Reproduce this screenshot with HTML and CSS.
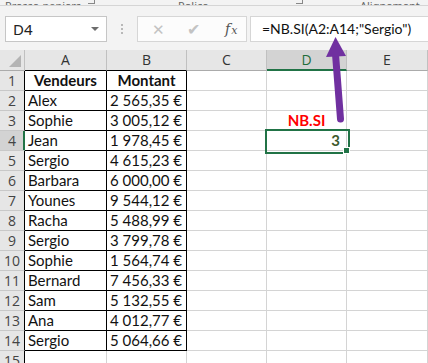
FILE: index.html
```html
<!DOCTYPE html>
<html lang="fr">
<head>
    <meta charset="UTF-8">
    <title>NB.SI - Excel</title>
    <link rel="stylesheet" href="styles.css">
</head>
<body>
    <div class="ribbon-tail">
        <span class="group-label lbl-clip">Presse-papiers</span>
        <span class="launcher"></span>
        <span class="group-label lbl-font">Police</span>
        <span class="launcher"></span>
        <span class="group-label lbl-align">Alignement</span>
    </div>

    <div class="formula-bar">
        <div class="name-box">
            <span>D4</span>
            <span class="caret"></span>
        </div>
        <div class="grip"><i></i><i></i><i></i></div>
        <div class="fx-buttons">
            <span class="btn-cancel">&#x2715;</span>
            <span class="btn-ok">&#x2714;</span>
            <span class="btn-fx"><i>f</i><i>x</i></span>
        </div>
        <div class="formula-input">=NB.SI(A2:A14;"Sergio")</div>
    </div>

    <div class="sheet">
        <div class="corner"><span class="select-all"></span></div>
        <div class="col-head in-table">A</div>
        <div class="col-head in-table">B</div>
        <div class="col-head">C</div>
        <div class="col-head active">D</div>
        <div class="col-head">E</div>

        <div class="row-head">1</div>
        <div class="cell t title">Vendeurs</div>
        <div class="cell t title">Montant</div>
        <div class="cell"></div><div class="cell"></div><div class="cell"></div>

        <div class="row-head">2</div>
        <div class="cell t">Alex</div><div class="cell t num">2&nbsp;565,35 €</div>
        <div class="cell"></div><div class="cell"></div><div class="cell"></div>

        <div class="row-head">3</div>
        <div class="cell t">Sophie</div><div class="cell t num">3&nbsp;005,12 €</div>
        <div class="cell"></div><div class="cell label-red">NB.SI</div><div class="cell"></div>

        <div class="row-head active">4</div>
        <div class="cell t">Jean</div><div class="cell t num">1&nbsp;978,45 €</div>
        <div class="cell"></div><div class="cell selected">3</div><div class="cell"></div>

        <div class="row-head">5</div>
        <div class="cell t">Sergio</div><div class="cell t num">4&nbsp;615,23 €</div>
        <div class="cell"></div><div class="cell"></div><div class="cell"></div>

        <div class="row-head">6</div>
        <div class="cell t">Barbara</div><div class="cell t num">6&nbsp;000,00 €</div>
        <div class="cell"></div><div class="cell"></div><div class="cell"></div>

        <div class="row-head">7</div>
        <div class="cell t">Younes</div><div class="cell t num">9&nbsp;544,12 €</div>
        <div class="cell"></div><div class="cell"></div><div class="cell"></div>

        <div class="row-head">8</div>
        <div class="cell t">Racha</div><div class="cell t num">5&nbsp;488,99 €</div>
        <div class="cell"></div><div class="cell"></div><div class="cell"></div>

        <div class="row-head">9</div>
        <div class="cell t">Sergio</div><div class="cell t num">3&nbsp;799,78 €</div>
        <div class="cell"></div><div class="cell"></div><div class="cell"></div>

        <div class="row-head">10</div>
        <div class="cell t">Sophie</div><div class="cell t num">1&nbsp;564,74 €</div>
        <div class="cell"></div><div class="cell"></div><div class="cell"></div>

        <div class="row-head">11</div>
        <div class="cell t">Bernard</div><div class="cell t num">7&nbsp;456,33 €</div>
        <div class="cell"></div><div class="cell"></div><div class="cell"></div>

        <div class="row-head">12</div>
        <div class="cell t">Sam</div><div class="cell t num">5&nbsp;132,55 €</div>
        <div class="cell"></div><div class="cell"></div><div class="cell"></div>

        <div class="row-head">13</div>
        <div class="cell t">Ana</div><div class="cell t num">4&nbsp;012,77 €</div>
        <div class="cell"></div><div class="cell"></div><div class="cell"></div>

        <div class="row-head">14</div>
        <div class="cell t">Sergio</div><div class="cell t num">5&nbsp;064,66 €</div>
        <div class="cell"></div><div class="cell"></div><div class="cell"></div>

        <div class="row-head">15</div>
        <div class="cell"></div><div class="cell"></div>
        <div class="cell"></div><div class="cell"></div><div class="cell"></div>
    </div>

    <!-- fleche violette qui montre la formule -->
    <svg class="arrow" width="428" height="363" viewBox="0 0 428 363">
        <line x1="340.5" y1="119" x2="335.5" y2="54" stroke="#7030a0" stroke-width="7" stroke-linecap="round"/>
        <polygon points="335.5,37 326,57 346,56" fill="#7030a0"/>
    </svg>
</body>
</html>
```

FILE: styles.css
```css
body {
    margin: 0;
    width: 428px;
    height: 363px;
    overflow: hidden;
    background-color: #f3f3f3;
    font-family: Lato, "Liberation Sans", sans-serif;
    position: relative;
}

/* bas du ruban, coupé */
.ribbon-tail {
    height: 5px;
    border-bottom: 1px solid #d5d5d5;
    overflow: hidden;
    display: flex;
    align-items: flex-end;
    font-family: "Noto Sans", sans-serif;
    font-size: 11px;
    color: #666;
    white-space: nowrap;
}

.ribbon-tail > span {
    flex-shrink: 0;
}

.group-label {
    line-height: 12px;
    margin-bottom: -7px;
}

.lbl-clip { margin-left: 5px; width: 83px; }
.lbl-font { margin-left: 83px; width: 118px; }
.lbl-align { margin-left: 57px; }

.launcher {
    width: 6px;
    height: 6px;
    border-right: 1px solid #888;
    border-bottom: 1px solid #888;
    margin-bottom: 1px;
}

/* barre de formule */
.formula-bar {
    display: flex;
    align-items: center;
    padding: 10px 0 8px 5px;
    height: 26px;
}

.name-box {
    height: 24px;
    width: 93px;
    background-color: white;
    border: 1px solid #c6c6c6;
    display: flex;
    align-items: center;
    justify-content: space-between;
    padding-left: 7px;
    font-size: 15px;
    color: #222;
    font-family: "Noto Sans", sans-serif;
}

.caret {
    width: 0;
    height: 0;
    border-left: 4px solid transparent;
    border-right: 4px solid transparent;
    border-top: 4px solid #6d6d6d;
    margin-right: 7px;
}

.grip {
    width: 30px;
    display: flex;
    flex-direction: column;
    align-items: center;
    gap: 2px;
}

.grip i {
    width: 2px;
    height: 2px;
    background-color: #b8b8b8;
}

.fx-buttons {
    width: 108px;
    height: 24px;
    background-color: #fcfcfc;
    border: 1px solid #d6d6d6;
    display: flex;
    align-items: center;
    color: #c3c3c3;
    font-size: 15px;
}

.btn-cancel { margin-left: 14px; }
.btn-ok { margin-left: 22px; font-size: 16px; }

.btn-fx {
    margin-left: 25px;
    font-family: "DejaVu Serif", serif;
    color: #555;
    font-size: 14px;
}

.btn-fx i:last-child {
    font-size: 11px;
    margin-left: 1px;
}

.formula-input {
    flex: 1;
    height: 24px;
    margin-left: 3px;
    background-color: white;
    border: 1px solid #d6d6d6;
    border-right: none;
    padding-left: 11px;
    line-height: 24px;
    font-size: 14px;
    color: #111;
}

/* grille */
.sheet {
    display: grid;
    grid-template-columns: 25px 82px 80px 80px 80px 81px;
    grid-template-rows: 21px;
    grid-auto-rows: 20px;
    background-color: white;
}

.sheet > div {
    box-sizing: border-box;
    border-right: 1px solid #d4d4d4;
    border-bottom: 1px solid #d4d4d4;
}

.corner,
.col-head,
.row-head {
    background-color: #e6e6e6;
    color: #333;
    font-family: "Open Sans", sans-serif;
    font-size: 14px;
}

.sheet > .corner,
.sheet > .col-head {
    border-right: 1px solid #c0c0c0;
    border-bottom: 1px solid #ababab;
}

.corner {
    position: relative;
}

.select-all {
    position: absolute;
    right: 3px;
    bottom: 3px;
    width: 0;
    height: 0;
    border-left: 12px solid transparent;
    border-bottom: 12px solid #b4b4b4;
}

.col-head {
    text-align: center;
    line-height: 20px;
}

.sheet > .col-head.in-table {
    border-bottom-color: #000;
}

.sheet > .col-head.active {
    background-color: #d3d3d3;
    color: #1f6d3a;
    border-bottom: 2px solid #217346;
}

.row-head {
    text-align: center;
    line-height: 19px;
    color: #444;
}

.sheet > .row-head {
    border-bottom-color: #c8c8c8;
    border-right-color: #000;
}

.sheet > .row-head:last-of-type {
    border-right-color: #c0c0c0;
}

.sheet > .row-head.active {
    background-color: #d3d3d3;
    box-shadow: inset -1px 0 0 #217346;
    border-right-color: #217346;
}

.cell {
    font-size: 15px;
    line-height: 19px;
    color: #111;
    padding: 0 3px;
    white-space: nowrap;
}

.sheet > .cell.t {
    border-right-color: #000;
    border-bottom-color: #000;
}

.title {
    font-weight: bold;
    text-align: center;
}

.num {
    text-align: right;
    padding-right: 6px;
}

.label-red {
    color: #ff0000;
    font-weight: bold;
    text-align: center;
}

.selected {
    position: relative;
    text-align: right;
    font-weight: bold;
    color: #3d5a2c;
    padding-right: 6px;
}

/* cadre de sélection et poignée */
.selected::after {
    content: "";
    position: absolute;
    left: -2px;
    top: -2px;
    width: 81px;
    height: 21px;
    border: 2px solid #217346;
}

.selected::before {
    content: "";
    position: absolute;
    right: -4px;
    bottom: -4px;
    width: 5px;
    height: 5px;
    background-color: #217346;
    border: 1px solid white;
    z-index: 1;
}

.arrow {
    position: absolute;
    left: 0;
    top: 0;
    pointer-events: none;
}
```
